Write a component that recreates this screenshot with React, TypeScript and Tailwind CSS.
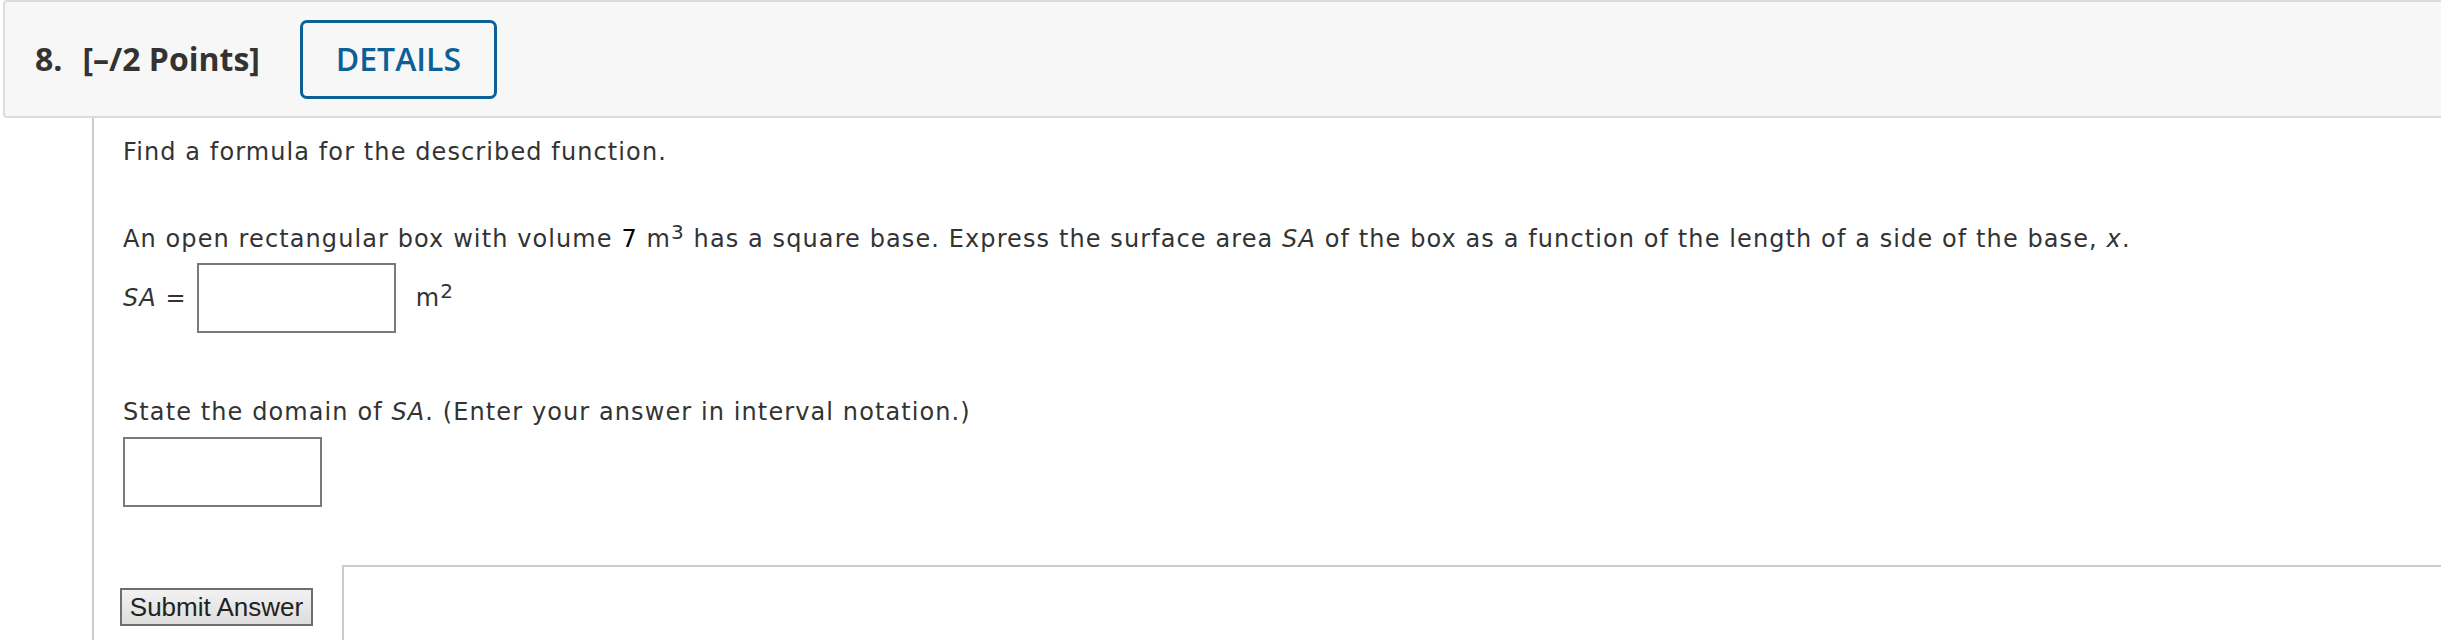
import React from 'react';

const body = "font-['DejaVu_Sans',Verdana,sans-serif] text-[24px] leading-[36px] tracking-[1.1px] text-[#333]";

function AnswerBox({ className = '' }: { className?: string }) {
  return (
    <div className={`h-[70px] w-[199px] shrink-0 border-2 border-[#7a7a7a] bg-white ${className}`} />
  );
}

export default function App() {
  return (
    <div className="h-[640px] w-full overflow-hidden bg-white">
      {/* question header */}
      <div className="ml-[3px] flex h-[118px] w-[2480px] items-center rounded-[4px] border-2 border-[#dcdcdc] bg-[#f7f7f7] pl-[30px] font-['Open_Sans',sans-serif] text-[32px] text-[#333]">
        <span className="font-bold">8.</span>
        <span className="ml-[20px] font-bold">[–/2 Points]</span>
        <button className="ml-[40px] flex h-[79px] w-[197px] items-center justify-center rounded-[7px] border-[3px] border-[#0b6197] font-semibold text-[#0b6197]">
          DETAILS
        </button>
      </div>

      {/* question body */}
      <div className="ml-[92px] h-[540px] border-l-2 border-[#cccccc] pl-[29px]">
        <p className={`${body} pt-[16px]`}>Find a formula for the described function.</p>

        <p className={`${body} mt-[51px]`}>
          An open rectangular box with volume <span className="text-black">7</span> m
          <sup className="relative -top-[8px] align-baseline text-[20px]">3</sup> has a square base. Express the surface
          area <i>SA</i> of the box as a function of the length of a side of the base, <i>x</i>.
        </p>

        <div className={`${body} mt-[6px] flex items-center`}>
          <span>
            <i>SA</i> =
          </span>
          <AnswerBox className="ml-[10px]" />
          <span className="ml-[20px]">
            m<sup className="relative -top-[8px] align-baseline text-[20px]">2</sup>
          </span>
        </div>

        <p className={`${body} mt-[61px]`}>
          State the domain of <i>SA</i>. (Enter your answer in interval notation.)
        </p>
        <AnswerBox className="mt-[7px]" />

        <div className="-ml-[3px] mt-[58px] flex items-start">
          <button className="mt-[23px] h-[38px] w-[193px] shrink-0 border-2 border-[#6e6e6e] bg-gradient-to-b from-[#f2f2f2] to-[#dddddd] font-['Liberation_Sans',Arial,sans-serif] text-[26px] leading-none text-[#222]">
            Submit Answer
          </button>
          <div className="ml-[29px] h-[120px] w-[2200px] shrink-0 border-2 border-[#cccccc]" />
        </div>
      </div>
    </div>
  );
}
